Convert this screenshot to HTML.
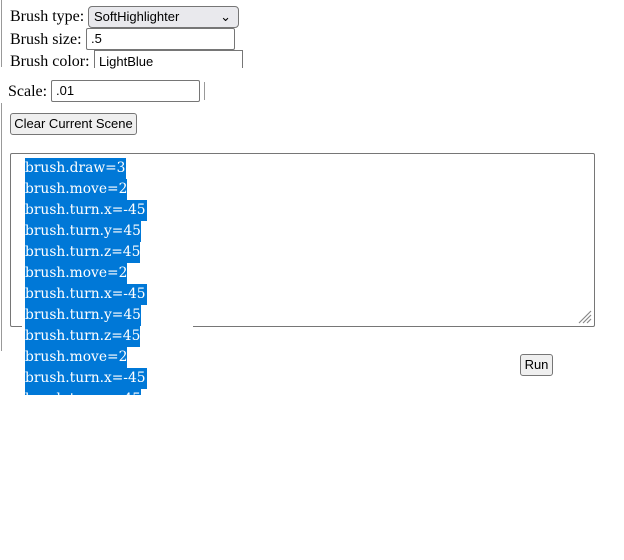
<!DOCTYPE html>
<html><head><style>
body{margin:0;width:624px;height:560px;background:#fff;position:relative;overflow:hidden;font-family:"Liberation Serif",serif;font-size:16px;color:#000}
.a{position:absolute}
.inp{position:absolute;border:1px solid #767676;border-radius:2px;background:#fff;font:13px "Liberation Sans",sans-serif;padding-left:4px;box-sizing:border-box;line-height:19px}
.btn{position:absolute;background:#efefef;border:1px solid #767676;border-radius:3px;font:13px "Liberation Sans",sans-serif;text-align:center;box-sizing:border-box}
.ln{position:absolute;left:25px;height:21px;background:#0078d7;color:#fff;font:13.8px "DejaVu Serif",serif;line-height:21px;white-space:pre;overflow:hidden}
</style></head><body>
<div class="a" style="left:1px;top:0;width:1px;height:67px;background:#999"></div>
<div class="a" style="left:1px;top:103px;width:1px;height:248px;background:#999"></div>
<div class="a" style="left:204px;top:82px;width:1px;height:18px;background:#999"></div>
<div class="a" style="left:10px;top:8px">Brush type:</div>
<div class="inp" style="left:88px;top:6px;width:151px;height:22px;background:#e9e9ed;border-radius:4px;padding-left:5px">SoftHighlighter<span style="position:absolute;right:7px;top:0">&#8964;</span></div>
<div class="a" style="left:10px;top:31px">Brush size:</div>
<div class="inp" style="left:86px;top:28px;width:149px;height:22px">.5</div>
<div class="a" style="left:10px;top:53px">Brush color:</div>
<div class="inp" style="left:94px;top:50px;width:149px;height:18px;border-bottom:none;border-radius:0;line-height:21px">LightBlue</div>
<div class="a" style="left:8px;top:83px">Scale:</div>
<div class="inp" style="left:51px;top:80px;width:149px;height:22px;line-height:20px">.01</div>
<div class="btn" style="left:10px;top:113px;width:127px;height:22px;line-height:20px">Clear Current Scene</div>
<div class="a" style="left:10px;top:153px;width:585px;height:174px;border:1px solid #767676;box-sizing:border-box;border-radius:2px"></div>
<svg class="a" style="left:578px;top:310px" width="14" height="14"><path d="M13 1L1 13M13 5L5 13M13 9L9 13" stroke="#888" stroke-width="1.2"/></svg>
<div class="a" style="left:22px;top:320px;width:171px;height:80px;background:#fff"></div>
<div class="ln" style="top:158px;width:101px">brush.draw=3</div>
<div class="ln" style="top:179px;width:102px">brush.move=2</div>
<div class="ln" style="top:200px;width:122px">brush.turn.x=-45</div>
<div class="ln" style="top:221px;width:116px">brush.turn.y=45</div>
<div class="ln" style="top:242px;width:115px">brush.turn.z=45</div>
<div class="ln" style="top:263px;width:102px">brush.move=2</div>
<div class="ln" style="top:284px;width:122px">brush.turn.x=-45</div>
<div class="ln" style="top:305px;width:116px">brush.turn.y=45</div>
<div class="ln" style="top:326px;width:115px">brush.turn.z=45</div>
<div class="ln" style="top:347px;width:102px">brush.move=2</div>
<div class="ln" style="top:368px;width:122px">brush.turn.x=-45</div>
<div class="ln" style="top:389px;width:116px">brush.turn.y=45</div>
<div class="a" style="left:0;top:395px;width:624px;height:165px;background:#fff"></div>
<div class="btn" style="left:520px;top:354px;width:33px;height:22px;line-height:20px">Run</div>
</body></html>
